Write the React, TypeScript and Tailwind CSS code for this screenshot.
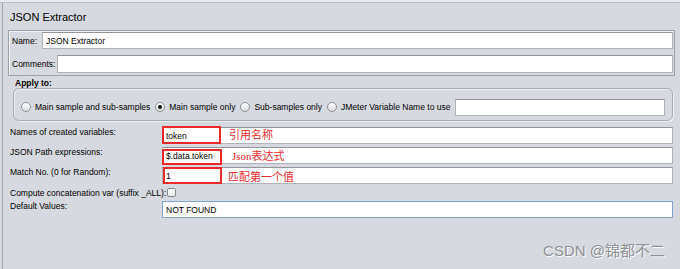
import React from 'react';

const Field: React.FC<{ value?: string; blue?: boolean; className?: string; children?: React.ReactNode }> = ({
  value = '',
  blue,
  className = '',
  children,
}) => (
  <div className={`relative h-[17px] ${className}`}>
    <input
      readOnly
      value={value}
      className={`block w-full h-full bg-white px-[3px] text-[8.5px] text-black outline-none border ${
        blue ? 'border-[#7ea3d0]' : 'border-[#b1b3b7] border-t-[#939599]'
      }`}
    />
    {children}
  </div>
);

const Radio: React.FC<{ checked?: boolean; label: string }> = ({ checked, label }) => (
  <div className="flex items-center gap-[4px] mr-[5px]">
    <span className="w-[10px] h-[10px] rounded-full border border-[#8d9095] bg-gradient-to-b from-white to-[#dcdde0] flex items-center justify-center">
      {checked && <span className="w-[4px] h-[4px] rounded-full bg-[#111]" />}
    </span>
    <span className="text-[8.5px] leading-[10px] whitespace-nowrap">{label}</span>
  </div>
);

const Note: React.FC<{ text: React.ReactNode; left: string; top: string }> = ({ text, left, top }) => (
  <span
    className={`absolute ${left} ${top} text-[11px] leading-[13px] text-[#ea2a2a] whitespace-nowrap font-['Noto_Sans_CJK_SC',sans-serif]`}
  >
    {text}
  </span>
);

export default function App() {
  return (
    <div className="relative w-[680px] h-[269px] overflow-hidden bg-[#d6d9df] text-black leading-none font-['Liberation_Sans',Arial,sans-serif]">
      <div className="h-[3px] bg-[#e9ebee] border-b border-[#b9bcc1]" />
      <div className="ml-[2px] h-[266px] border-l border-[#a3a6ab]">
        <div className="pl-[7px] pt-[8px] text-[11px] leading-[13px]">JSON Extractor</div>

        <div className="ml-[5px] mr-[5px] mt-[6px] h-[46px] border border-[#9ea1a6] shadow-[inset_1px_1px_0_#f2f3f5] pl-[3px] pr-[1px] pt-[1px]">
          <div className="flex items-center">
            <span className="w-[30px] text-[8.5px] leading-[10px]">Name:</span>
            <Field value="JSON Extractor" className="flex-1" />
          </div>
          <div className="flex items-center mt-[6px]">
            <span className="w-[45px] text-[8.5px] leading-[10px]">Comments:</span>
            <Field className="flex-1 h-[18px]" />
          </div>
        </div>

        <div className="pl-[12px] mt-[2px] text-[8.5px] leading-[10px] font-bold">Apply to:</div>
        <div className="ml-[10px] mr-[7px] h-[33px] rounded-[6px] border border-[#a8abb0] shadow-[inset_1px_1px_0_#eef0f2,1px_1px_0_#eef0f2] flex items-center pt-[5px] pl-[7px] pr-[7px]">
          <Radio label="Main sample and sub-samples" />
          <Radio checked label="Main sample only" />
          <Radio label="Sub-samples only" />
          <Radio label="JMeter Variable Name to use" />
          <Field className="flex-1" />
        </div>

        <div className="pl-[7px] pr-[7px] mt-[6px] grid grid-cols-[152px_1fr] gap-y-[3px] text-[8.5px]">
          <span className="leading-[10px]">Names of created variables:</span>
          <Field value="token">
            <span className="absolute left-0 top-[-1px] w-[59px] h-[18px] border-2 border-[#ea2a2a]" />
            <Note text="引用名称" left="left-[67px]" top="top-[1px]" />
          </Field>

          <span className="leading-[10px]">JSON Path expressions:</span>
          <Field value="$.data.token">
            <span className="absolute left-0 top-[2px] w-[60px] h-[16px] border-2 border-[#ea2a2a]" />
            <Note
              text={
                <>
                  <span className="font-['Liberation_Serif',serif]">Json</span>表达式
                </>
              }
              left="left-[70px]"
              top="top-[2px]"
            />
          </Field>

          <span className="leading-[10px]">Match No. (0 for Random):</span>
          <Field value="1">
            <span className="absolute left-[1px] top-0 w-[59px] h-[17px] border-2 border-[#ea2a2a]" />
            <Note text="匹配第一个值" left="left-[66px]" top="top-[3px]" />
          </Field>

          <div className="col-span-2 flex items-center h-[11px]">
            <span className="leading-[10px] whitespace-nowrap">Compute concatenation var (suffix _ALL):</span>
            <span className="ml-[1px] w-[9px] h-[9px] rounded-[2px] border border-[#85888d] bg-gradient-to-b from-white to-[#e6e7ea]" />
          </div>

          <span className="leading-[10px]">Default Values:</span>
          <Field value="NOT FOUND" blue />
        </div>
      </div>

      <div className="absolute right-[15px] bottom-[9px] text-[15px] leading-[18px] text-[#8e9094] [text-shadow:1px_1px_0_#ffffff] font-['Liberation_Sans','Noto_Sans_CJK_SC',sans-serif]">
        CSDN @锦都不二
      </div>
    </div>
  );
}
